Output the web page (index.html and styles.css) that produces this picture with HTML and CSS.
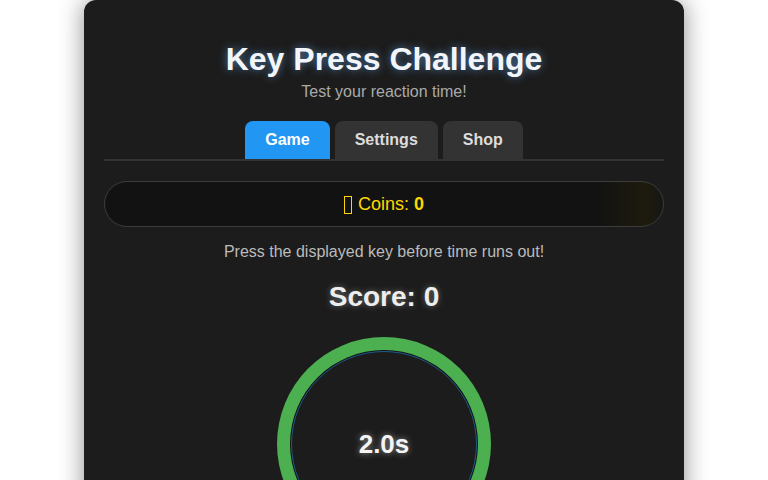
FILE: index.html
```html
<!DOCTYPE html>
<html lang="en">
<head>
    <meta charset="UTF-8">
    <meta name="viewport" content="width=device-width, initial-scale=1.0">
    <title>Key Press Challenge</title>
    <link rel="stylesheet" href="styles.css">
</head>
<body>
<div class="game-container">
    <h1>Key Press Challenge</h1>
    <p class="subtitle">Test your reaction time!</p>

    <nav class="tabs">
        <button class="tab active">Game</button>
        <button class="tab">Settings</button>
        <button class="tab">Shop</button>
    </nav>

    <section id="game-tab">
        <div class="coins"><span class="coin-icon" aria-hidden="true"></span> Coins: <strong id="coins">0</strong></div>
        <p class="instructions">Press the displayed key before time runs out!</p>
        <div class="score">Score: <span id="score">0</span></div>

        <div class="timer">
            <div class="timer-inner">
                <span id="time">2.0s</span>
            </div>
        </div>
    </section>
</div>
</body>
</html>
```

FILE: styles.css
```css
body {
    font-family: 'Liberation Sans', Arial, sans-serif;
    margin: 0;
    padding: 0;
    background-color: #fff;
    color: #eee;
}

.game-container {
    width: 560px;
    margin: 0 auto;
    padding: 41px 20px 40px;
    background-color: #1c1c1c;
    border-radius: 12px;
    box-shadow: 0 0 24px rgba(0, 0, 0, 0.45);
    text-align: center;
}

h1 {
    margin: 0 0 5px;
    font-size: 32px;
    font-weight: bold;
    color: #f2f6fa;
    text-shadow: 0 0 8px rgba(110, 180, 255, 0.6);
}

.subtitle {
    margin: 0 0 20px;
    font-size: 16px;
    color: #aaa;
}

.tabs {
    display: flex;
    justify-content: center;
    gap: 5px;
    border-bottom: 2px solid #333;
}

.tab {
    font-family: inherit;
    font-size: 16px;
    font-weight: bold;
    padding: 10px 20px;
    line-height: 18px;
    border: none;
    border-radius: 8px 8px 0 0;
    background-color: #333;
    color: #ddd;
    cursor: pointer;
}

.tab.active {
    background-color: #2196f3;
    color: #fff;
}

.coins {
    margin-top: 20px;
    padding: 12px;
    font-size: 18px;
    line-height: 20px;
    color: #ffd700;
    border: 1px solid #3c3c3c;
    border-radius: 24px;
    background: linear-gradient(90deg, #121212 0%, #121212 88%, #1e1a0d 97%, #161616 100%);
}

/* placeholder box, the coin glyph is missing from the font */
.coin-icon {
    display: inline-block;
    width: 6px;
    height: 16px;
    border: 1px solid #ffd700;
    vertical-align: -4px;
    margin-right: 1px;
}

.coins strong {
    font-weight: bold;
}

.instructions {
    margin: 16px 0 0;
    font-size: 16px;
    color: #bbb;
}

.score {
    margin-top: 20px;
    font-size: 28px;
    font-weight: bold;
    color: #eee;
    text-shadow: 0 0 6px rgba(255, 255, 255, 0.35);
}

.timer {
    width: 214px;
    height: 214px;
    margin: 24px auto 0;
    border-radius: 50%;
    background-color: #4caf50;
    display: flex;
    align-items: center;
    justify-content: center;
}

.timer-inner {
    width: 184px;
    height: 184px;
    border-radius: 50%;
    background-color: #1c1c1c;
    border: 1px solid #1d5a8c;
    box-shadow: 0 0 0 1px #111;
    display: flex;
    align-items: center;
    justify-content: center;
}

#time {
    font-size: 26px;
    font-weight: bold;
    color: #f4f4f4;
    text-shadow: 0 0 6px rgba(255, 255, 255, 0.5);
}
```
